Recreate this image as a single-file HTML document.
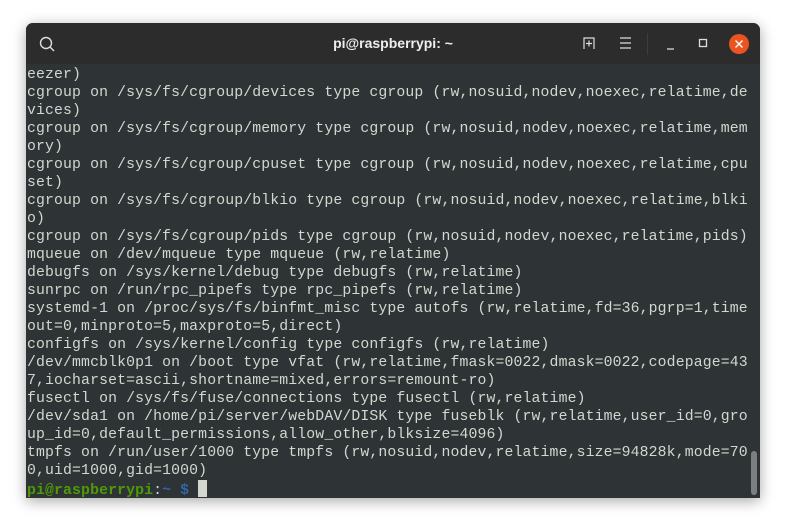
<!DOCTYPE html>
<html><head><meta charset="utf-8"><style>
html,body{margin:0;padding:0;width:786px;height:527px;background:#fff;overflow:hidden}
.win{position:absolute;left:26px;top:23px;width:734px;height:475px;background:#2e3436;border-radius:7px 7px 0 0;box-shadow:0 3px 14px rgba(0,0,0,0.35);overflow:hidden}
.hdr{position:absolute;left:0;top:0;width:734px;height:41px;background:#2c2c2c}
.title{position:absolute;left:0;right:0;top:12px;text-align:center;color:#eee;font:bold 14px "Liberation Sans",sans-serif}
.term{position:absolute;left:1px;top:43px;font:14.8px/18px "Liberation Mono",monospace;letter-spacing:0.13px;color:#d3d7cf;white-space:pre}
.g{color:#4e9a06;font-weight:bold}.b{color:#3465a4;font-weight:bold}
.cur{display:inline-block;width:9px;height:17px;background:#d3d7cf;vertical-align:-3px}
.sb{position:absolute;left:725px;top:428px;width:6px;height:44px;border-radius:3px;background:#7c7f80}
</style></head><body>
<div class="win">
<div class="hdr">
<svg width="734" height="41" style="position:absolute;left:0;top:0">
<circle cx="20" cy="20" r="5.5" fill="none" stroke="#ddd" stroke-width="1.4"/><line x1="24" y1="24" x2="28" y2="28" stroke="#ddd" stroke-width="1.4"/>
<path d="M558 26V15h10v11" fill="none" stroke="#ddd" stroke-width="1.2"/><path d="M563 17.5v6M560 20.5h6" stroke="#ddd" stroke-width="1.2"/>
<path d="M594 15h11M594 20h11M594 25h11" stroke="#ddd" stroke-width="1.2"/>
<line x1="621.5" y1="10" x2="621.5" y2="32" stroke="#3d3d3d"/>
<path d="M641 26h7" stroke="#ddd" stroke-width="1.3"/>
<rect x="673.5" y="16.5" width="7" height="7" fill="none" stroke="#ddd" stroke-width="1.3"/>
<circle cx="713" cy="21" r="10" fill="#e95420"/><path d="M709.5 17.5l7 7M716.5 17.5l-7 7" stroke="#fff" stroke-width="1.4"/>
</svg>
<div class="title">pi@raspberrypi: ~</div>
</div>
<div class="term">eezer)
cgroup on /sys/fs/cgroup/devices type cgroup (rw,nosuid,nodev,noexec,relatime,de
vices)
cgroup on /sys/fs/cgroup/memory type cgroup (rw,nosuid,nodev,noexec,relatime,mem
ory)
cgroup on /sys/fs/cgroup/cpuset type cgroup (rw,nosuid,nodev,noexec,relatime,cpu
set)
cgroup on /sys/fs/cgroup/blkio type cgroup (rw,nosuid,nodev,noexec,relatime,blki
o)
cgroup on /sys/fs/cgroup/pids type cgroup (rw,nosuid,nodev,noexec,relatime,pids)
mqueue on /dev/mqueue type mqueue (rw,relatime)
debugfs on /sys/kernel/debug type debugfs (rw,relatime)
sunrpc on /run/rpc_pipefs type rpc_pipefs (rw,relatime)
systemd-1 on /proc/sys/fs/binfmt_misc type autofs (rw,relatime,fd=36,pgrp=1,time
out=0,minproto=5,maxproto=5,direct)
configfs on /sys/kernel/config type configfs (rw,relatime)
/dev/mmcblk0p1 on /boot type vfat (rw,relatime,fmask=0022,dmask=0022,codepage=43
7,iocharset=ascii,shortname=mixed,errors=remount-ro)
fusectl on /sys/fs/fuse/connections type fusectl (rw,relatime)
/dev/sda1 on /home/pi/server/webDAV/DISK type fuseblk (rw,relatime,user_id=0,gro
up_id=0,default_permissions,allow_other,blksize=4096)
tmpfs on /run/user/1000 type tmpfs (rw,nosuid,nodev,relatime,size=94828k,mode=70
0,uid=1000,gid=1000)
<span class="g">pi@raspberrypi</span>:<span class="b">~ $</span> <span class="cur"></span></div>
<div class="sb"></div>
</div>
</body></html>
